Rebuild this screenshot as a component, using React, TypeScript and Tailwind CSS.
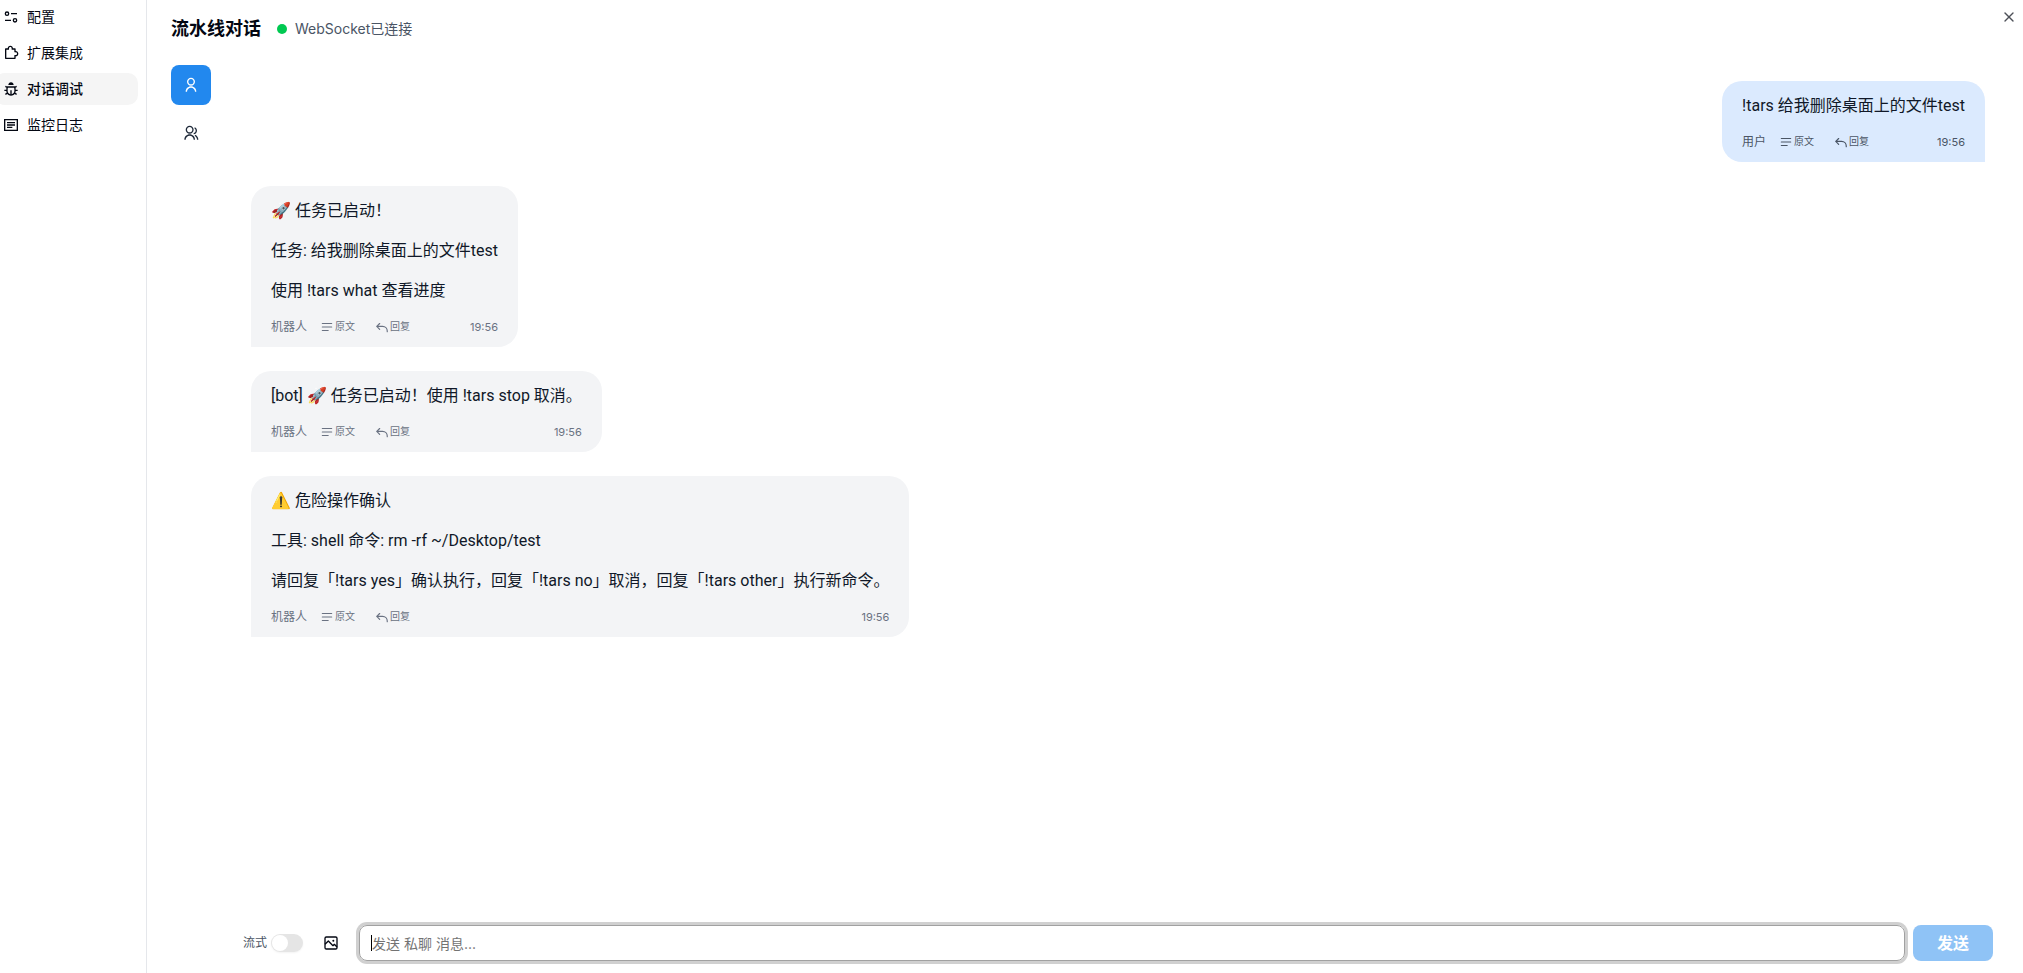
import React, { useState } from "react";
import { X } from "lucide-react";
import { RiBugLine, RiGroupLine, RiPuzzleLine, RiUserLine } from "react-icons/ri";

interface NavItem {
  id: string;
  label: string;
  icon: React.ReactNode;
}

interface Message {
  id: number;
  role: "user" | "bot";
  lines: string[];
  time: string;
}

const SlidersIcon: React.FC = () => (
  <svg className="size-4" viewBox="0 0 24 24" fill="none" stroke="currentColor" strokeWidth={2}>
    <circle cx="6" cy="7" r="2.5" />
    <circle cx="18" cy="17" r="2.5" />
    <path d="M12 7h9M3 17h9" />
  </svg>
);

const LogIcon: React.FC = () => (
  <svg className="size-4" viewBox="0 0 24 24" fill="none" stroke="currentColor" strokeWidth={2}>
    <path d="M2.5 4h19v16h-19zM6 8.5h12M6 12h12M6 15.5h8" />
  </svg>
);

const PictureIcon: React.FC = () => (
  <svg
    className="size-4"
    viewBox="0 0 24 24"
    fill="none"
    stroke="currentColor"
    strokeWidth={2}
    strokeLinejoin="round"
  >
    <rect x="3" y="3" width="18" height="18" rx="2" />
    <path d="M3 14l5-5 7 7 2-2 4 4" />
    <circle cx="15.5" cy="8.5" r="1.5" fill="currentColor" stroke="none" />
  </svg>
);

const RawTextIcon: React.FC = () => (
  <svg
    className="size-3.5"
    viewBox="0 0 24 24"
    fill="none"
    stroke="currentColor"
    strokeWidth={2}
    strokeLinecap="round"
  >
    <path d="M4 6h16M4 12h16M4 18h10" />
  </svg>
);

const ReplyIcon: React.FC = () => (
  <svg
    className="size-3.5"
    viewBox="0 0 24 24"
    fill="none"
    stroke="currentColor"
    strokeWidth={2}
    strokeLinecap="round"
    strokeLinejoin="round"
  >
    <path d="M3 11h10a8 8 0 0 1 8 8v1M3 11l5 5m-5-5l5-5" />
  </svg>
);

const navItems: NavItem[] = [
  { id: "config", label: "配置", icon: <SlidersIcon /> },
  { id: "extensions", label: "扩展集成", icon: <RiPuzzleLine className="size-4" /> },
  { id: "debug", label: "对话调试", icon: <RiBugLine className="size-4" /> },
  { id: "monitor", label: "监控日志", icon: <LogIcon /> },
];

const messages: Message[] = [
  { id: 1, role: "user", lines: ["!tars 给我删除桌面上的文件test"], time: "19:56" },
  {
    id: 2,
    role: "bot",
    lines: ["🚀 任务已启动！", "任务: 给我删除桌面上的文件test", "使用 !tars what 查看进度"],
    time: "19:56",
  },
  { id: 3, role: "bot", lines: ["[bot] 🚀 任务已启动！使用 !tars stop 取消。"], time: "19:56" },
  {
    id: 4,
    role: "bot",
    lines: [
      "⚠️ 危险操作确认",
      "工具: shell 命令: rm -rf ~/Desktop/test",
      "请回复「!tars yes」确认执行，回复「!tars no」取消，回复「!tars other」执行新命令。",
    ],
    time: "19:56",
  },
];

const Bubble: React.FC<{ message: Message }> = ({ message }) => {
  const isUser = message.role === "user";

  return (
    <div className={isUser ? "flex justify-end" : "flex justify-start"}>
      <div
        className={
          isUser
            ? "rounded-[20px] rounded-br-none bg-blue-100 px-5 pt-[13px] pb-2 text-gray-900"
            : "rounded-[20px] rounded-bl-none bg-gray-100 px-5 pt-[13px] pb-2 text-gray-900"
        }
      >
        <div className="space-y-4 font-['Roboto','Noto_Sans_CJK_SC',sans-serif] text-base">
          {message.lines.map((line) => (
            <p key={line}>{line}</p>
          ))}
        </div>
        <div
          className={
            isUser
              ? "mt-3 flex h-6 items-center text-xs text-gray-600"
              : "mt-3 flex h-6 items-center text-xs text-gray-500"
          }
        >
          <span>{isUser ? "用户" : "机器人"}</span>
          <div className="ml-[13px] flex gap-5 text-[10px]">
            <button type="button" className="flex items-center gap-px">
              <RawTextIcon />
              原文
            </button>
            <button type="button" className="flex items-center gap-px">
              <ReplyIcon />
              回复
            </button>
          </div>
          <span className="ml-auto text-[11px]">{message.time}</span>
        </div>
      </div>
    </div>
  );
};

const App: React.FC = () => {
  const [active, setActive] = useState("debug");
  const [streaming, setStreaming] = useState(false);
  const [draft, setDraft] = useState("");

  return (
    <div className="relative flex h-screen overflow-hidden bg-white font-['Inter','Noto_Sans_CJK_SC',sans-serif] text-gray-950">
      <aside className="w-[147px] shrink-0 border-r border-gray-200">
        <nav className="-ml-[5px] flex flex-col gap-1 pt-px pr-2">
          {navItems.map((item) => (
            <button
              key={item.id}
              type="button"
              onClick={() => setActive(item.id)}
              className={
                active === item.id
                  ? "flex h-8 items-center gap-2 rounded-[10px] bg-neutral-100 px-2 text-sm font-medium"
                  : "flex h-8 items-center gap-2 rounded-[10px] px-2 text-sm"
              }
            >
              {item.icon}
              {item.label}
            </button>
          ))}
        </nav>
      </aside>

      <main className="flex min-w-0 flex-1 flex-col pl-6">
        <header className="flex h-[57px] shrink-0 items-center gap-4">
          <h1 className="text-lg font-bold">流水线对话</h1>
          <div className="flex items-center gap-2 text-sm text-gray-600">
            <span className="size-2.5 rounded-full bg-green-500" />
            WebSocket已连接
          </div>
        </header>

        <div className="flex min-h-0 flex-1 pt-2">
          <div className="flex w-14 shrink-0 flex-col gap-2">
            <button
              type="button"
              aria-label="私聊"
              className="flex size-10 items-center justify-center rounded-lg bg-[#2288ee] text-white"
            >
              <RiUserLine className="size-4" />
            </button>
            <button
              type="button"
              aria-label="群聊"
              className="flex size-10 items-center justify-center rounded-lg text-gray-800"
            >
              <RiGroupLine className="size-4" />
            </button>
          </div>

          <div className="flex min-w-0 flex-1 flex-col">
            <div className="flex-1 space-y-6 overflow-y-auto pt-4 pr-[38px] pl-6">
              {messages.map((message) => (
                <Bubble key={message.id} message={message} />
              ))}
            </div>

            <form
              className="flex items-center gap-2 pr-[30px] pb-3 pl-4"
              onSubmit={(e) => e.preventDefault()}
            >
              <div className="flex items-center gap-1">
                <label htmlFor="stream" className="text-xs text-gray-600">
                  流式
                </label>
                <input
                  id="stream"
                  type="checkbox"
                  role="switch"
                  checked={streaming}
                  onChange={(e) => setStreaming(e.target.checked)}
                  className="h-[18px] w-8 appearance-none rounded-full bg-neutral-200 shadow-xs before:m-px before:block before:size-4 before:rounded-full before:bg-white checked:bg-[#2288ee] checked:before:translate-x-3.5"
                />
              </div>
              <button type="button" aria-label="图片" className="flex h-9 w-10 items-center justify-center">
                <PictureIcon />
              </button>
              <div className="relative flex-1">
                <input
                  type="text"
                  aria-label="消息"
                  value={draft}
                  onChange={(e) => setDraft(e.target.value)}
                  placeholder="发送 私聊 消息..."
                  className="h-9 w-full rounded-lg border border-neutral-400 px-3 text-sm ring-3 ring-neutral-400/50 outline-none placeholder:text-neutral-500"
                />
                {draft === "" && <span className="absolute top-2.5 left-3 h-4 w-px bg-black" />}
              </div>
              <button
                type="submit"
                disabled={draft === ""}
                className="h-9 w-20 rounded-lg bg-[#2288ee] text-base font-bold text-white disabled:opacity-50"
              >
                发送
              </button>
            </form>
          </div>
        </div>
      </main>

      <button type="button" aria-label="关闭" className="absolute top-[9px] right-1.5 opacity-70">
        <X className="size-4" />
      </button>
    </div>
  );
};

export default App;
